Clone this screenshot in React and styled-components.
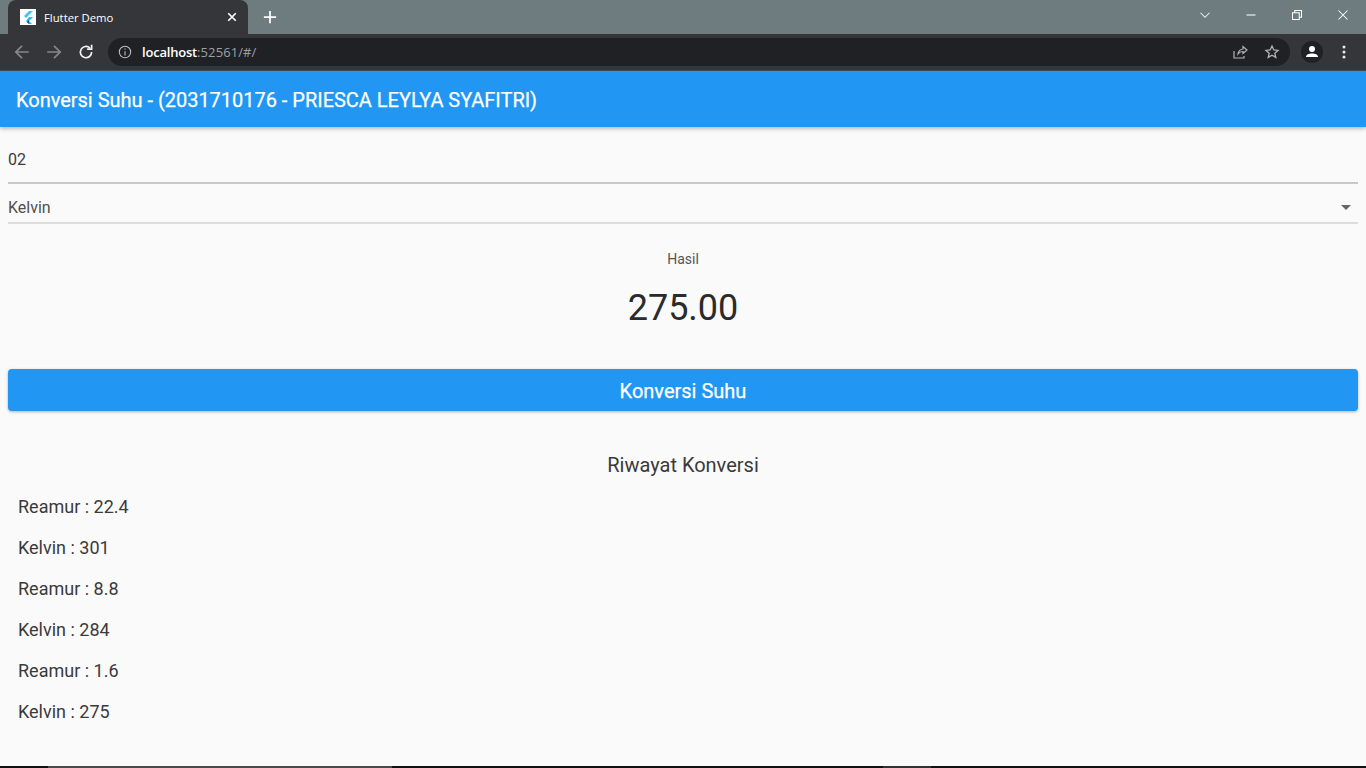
import React from "react";
import styled, { createGlobalStyle } from "styled-components";

const Global = createGlobalStyle`
  html, body { margin: 0; padding: 0; height: 100%; overflow: hidden; background: #fafafa; }
  body { font-family: Roboto, "Liberation Sans", sans-serif; }
  #root { height: 100%; }
`;
const Page = styled.div`width: 1366px; height: 768px; display: flex; flex-direction: column; overflow: hidden; background: #fafafa;`;
const TabStrip = styled.div`height: 34px; background: #6e7b7f; display: flex; align-items: flex-end; padding-left: 8px; flex: none;`;
const Tab = styled.div`
  width: 240px; height: 34px; background: #35363a; border-radius: 8px 8px 0 0; display: flex; align-items: center;
  padding: 0 10px 0 12px; box-sizing: border-box; color: #fff; font: 11.3px "Open Sans", "Liberation Sans", sans-serif; gap: 8px;
`;
const Favicon = styled.div`width: 16px; height: 16px; background: #fff; flex: none; display:flex;`;
const TabTitle = styled.span`flex: 1; white-space: nowrap;`;
const NewTab = styled.div`width: 28px; height: 28px; margin-left: 8px; margin-bottom: 3px; display: flex; align-items: center; justify-content: center;`;
const WinControls = styled.div`margin-left: auto; height: 34px; display: flex; align-items: flex-start;`;
const WinButton = styled.div`width: 46px; height: 29px; display: flex; align-items: center; justify-content: center;`;
const Toolbar = styled.div`height: 37px; background: #35363a; display: flex; align-items: center; padding: 0 6px 1px; box-sizing: border-box; flex: none; border-bottom: 1px solid #4a4b4f;`;
const NavIcon = styled.div`width: 32px; height: 32px; display: flex; align-items: center; justify-content: center; flex: none;`;
const Omnibox = styled.div`
  flex: 1; height: 28px; border-radius: 14px; background: #202124; margin-left: 6px; margin-right: 6px; display: flex; align-items: center;
  padding: 0 2px 0 10px; font: 13px "Open Sans", "Liberation Sans", sans-serif; color: #fff;
`;
const Url = styled.div`margin-left: 10px; flex: 1; font-weight: 600; letter-spacing: -0.2px; & span { color: #9aa0a6; font-weight: 400; letter-spacing: 0.1px; }`;
const AppBar = styled.header`
  height: 56px; background: #2196f3; color: #fff; display: flex; align-items: center; padding: 2px 16px 0; box-sizing: border-box; font-size: 20px; font-weight: 400; flex: none;
  -webkit-text-stroke: 0.25px #fff; letter-spacing: -0.02px;
  box-shadow: 0 2px 4px rgba(0,0,0,.25); position: relative; white-space: nowrap;
`;
const Body = styled.main`flex: 1; display: flex; flex-direction: column; padding: 0 8px; min-height: 0;`;
const TextRow = styled.div`height: 57px; border-bottom: 2px solid #c8c8c8; box-sizing: border-box; display: flex; align-items: center; font-size: 16px; color: #3a3a3a; padding-top: 9px; flex: none;`;
const SelectRow = styled.div`height: 40px; border-bottom: 2px solid #dcdcdc; box-sizing: border-box; display: flex; align-items: center; justify-content: space-between; font-size: 16px; color: #505050; flex: none; padding-top: 9px;`;
const Caret = styled.div`width: 0; height: 0; border-left: 5px solid transparent; border-right: 5px solid transparent; border-top: 5px solid #666; margin-right: 7px;`;
const Label = styled.div`text-align: center; font-size: 14px; color: #555; margin-top: 26px; height: 18px; line-height: 18px;`;
const Result = styled.div`text-align: center; font-size: 36px; color: #2b2b2b; margin-top: 19px; line-height: 42px;`;
const Convert = styled.button`
  height: 42px; margin-top: 40px; padding: 2px 0 0; background: #2196f3; color: #fff; border: 0; border-radius: 4px; font: 400 20px Roboto, sans-serif; flex: none;
  -webkit-text-stroke: 0.25px #fff;
  box-shadow: 0 1px 3px rgba(0,0,0,.3);
`;
const Heading = styled.div`text-align: center; font-size: 20px; color: #3a3a3a; margin-top: 42px; line-height: 24px;`;
const List = styled.ul`list-style: none; margin: 9px 0 0; padding: 0 10px; display: flex; flex-direction: column;`;
const Item = styled.li`height: 41px; line-height: 41px; font-size: 18px; color: #3a3a3a;`;
const Edge = styled.div`height: 2px; background: #111; flex: none; display: flex;`;
const EdgePart = styled.div`height: 2px; background: ${p => p.$c}; width: ${p => p.$w}px; margin-left: ${p => p.$m}px;`;

const Stroke = ({ children, size = 16, color = "#fff", w = 1.5, fill = "none" }) => (
  <svg width={size} height={size} viewBox="0 0 16 16" fill={fill} stroke={color} strokeWidth={w}>{children}</svg>
);

export default function App() {
  const items = ["Reamur : 22.4", "Kelvin : 301", "Reamur : 8.8", "Kelvin : 284", "Reamur : 1.6", "Kelvin : 275"];
  return (
    <Page>
      <Global />
      <TabStrip>
        <Tab>
          <Favicon>
            <svg width="16" height="16" viewBox="0 0 16 16">
              <path d="M9 2h4L6 9 4 7z" fill="#40c4ff" />
              <path d="M9 8h4L9 12l3 3H9L6 12z" fill="#29b6f6" />
              <path d="M9 15l-2-2 2-2z" fill="#01579b" />
            </svg>
          </Favicon>
          <TabTitle>Flutter Demo</TabTitle>
          <Stroke size={12} w={2.2}><path d="M3 3l10 10M13 3L3 13" /></Stroke>
        </Tab>
        <NewTab><Stroke size={14} w={2}><path d="M8 1v14M1 8h14" /></Stroke></NewTab>
        <WinControls>
          <WinButton><Stroke size={12} w={1.4} color="#f0f2f3"><path d="M2 5l6 6 6-6" /></Stroke></WinButton>
          <WinButton><Stroke size={12} w={1.4}><path d="M2 8h12" /></Stroke></WinButton>
          <WinButton><Stroke size={12} w={1.4}><path d="M2 5h9v9H2zM5 5V2h9v9h-3" /></Stroke></WinButton>
          <WinButton><Stroke size={12} w={1.4}><path d="M2 2l12 12M14 2L2 14" /></Stroke></WinButton>
        </WinControls>
      </TabStrip>
      <Toolbar>
        <NavIcon><Stroke size={18} color="#85878a"><path d="M14 8H2.500M8 2.500L2.500 8 8 13.500" /></Stroke></NavIcon>
        <NavIcon><Stroke size={18} color="#85878a"><path d="M2 8h11.500M8 2.500L13.500 8 8 13.500" /></Stroke></NavIcon>
        <NavIcon><Stroke size={18} color="#f1f3f4"><path d="M13 8a5 5 0 1 1-1.500-3.500" /><path d="M13 1.500v4H9" /></Stroke></NavIcon>
        <Omnibox>
          <Stroke size={14} color="#bdc1c6" w={1.2}><circle cx="8" cy="8" r="6.500" /><path d="M8 7v5M8 4v1.500" /></Stroke>
          <Url>localhost<span>:52561/#/</span></Url>
          <NavIcon><Stroke size={16} color="#b0b3b7" w={1.2}><path d="M2 7v7h10v-2" /><path d="M6 10c0-3 3-5 5-5V2.500L15 6l-4 3.500V7.500c-2 0-4 1-5 2.500z" /></Stroke></NavIcon>
          <NavIcon><Stroke size={16} color="#b0b3b7" w={1.3}><path d="M8 2l1.800 4 4.200.4-3.200 2.800 1 4.200L8 11.200 4.200 13.400l1-4.200L2 6.400 6.200 6z" /></Stroke></NavIcon>
        </Omnibox>
        <NavIcon>
          <svg width="22" height="22" viewBox="0 0 22 22">
            <circle cx="11" cy="11" r="11" fill="#202124" />
            <circle cx="11" cy="8" r="3" fill="#fff" />
            <path d="M5 16c0-2.500 3-3.500 6-3.500s6 1 6 3.500z" fill="#fff" />
          </svg>
        </NavIcon>
        <NavIcon>
          <svg width="4" height="14" viewBox="0 0 4 14" fill="#e8eaed"><circle cx="2" cy="2" r="1.500" /><circle cx="2" cy="7" r="1.500" /><circle cx="2" cy="12" r="1.500" /></svg>
        </NavIcon>
      </Toolbar>
      <AppBar>Konversi Suhu - (2031710176 - PRIESCA LEYLYA SYAFITRI)</AppBar>
      <Body>
        <TextRow>02</TextRow>
        <SelectRow>Kelvin<Caret /></SelectRow>
        <Label>Hasil</Label>
        <Result>275.00</Result>
        <Convert>Konversi Suhu</Convert>
        <Heading>Riwayat Konversi</Heading>
        <List>{items.map((t, i) => <Item key={i}>{t}</Item>)}</List>
      </Body>
      <Edge><EdgePart $c="#4a4a4a" $w={344} $m={48} /><EdgePart $c="#333" $w={48} $m={491} /></Edge>
    </Page>
  );
}
